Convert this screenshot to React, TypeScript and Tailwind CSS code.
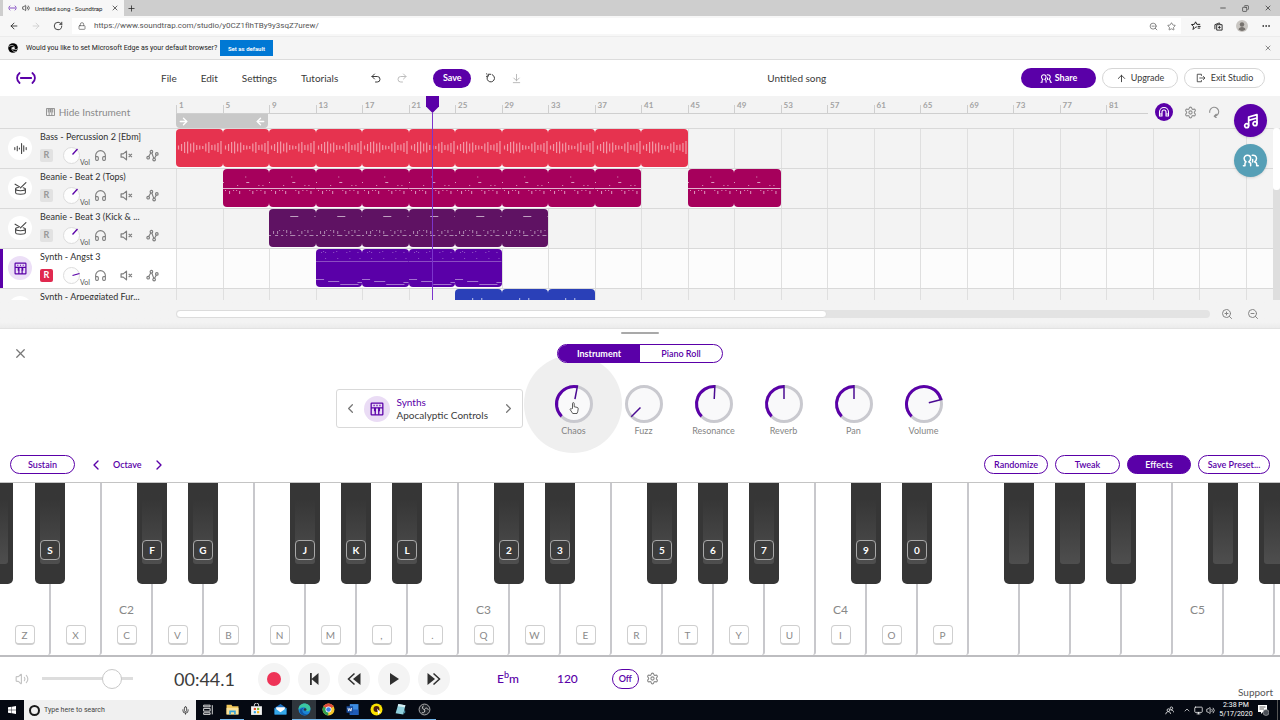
import React from "react";
import {
  ArrowLeft,
  ArrowRight,
  ArrowUp,
  ArrowDownToLine,
  ChevronLeft,
  ChevronRight,
  ChevronUp,
  Copy,
  Headphones,
  Lock,
  Mic,
  Minus,
  MoreHorizontal,
  Plus,
  Redo2,
  RotateCw,
  Settings,
  Star,
  Undo2,
  Volume2,
  X,
  ZoomIn,
  ZoomOut,
  Monitor,
} from "lucide-react";

type Kind = "wave" | "tops" | "kick" | "synth" | "arp";

/* ---------- icons ---------- */

const Logo = ({ className }: { className: string }) => (
  <svg viewBox="0 0 22 14" className={className} fill="none" stroke="currentColor" strokeWidth="1.8" strokeLinecap="round">
    <path d="M4.600 2C1.200 4.700 1.200 9.300 4.600 12M17.400 2c3.400 2.700 3.400 7.300 0 10M5.800 7h10.400" />
  </svg>
);

const EdgeMark = ({ className }: { className: string }) => (
  <svg viewBox="0 0 24 24" className={className}>
    <circle cx="12" cy="12" r="11.500" fill="#000" />
    <path d="M1 10C4 5 15 4 16 11c.4 2-1.500 3-1 4 1.500 2 7 1 8.500-2" fill="none" stroke="#f5f5f5" strokeWidth="1.600" />
    <path d="M10 10c-3 5 1 11 9 11" fill="none" stroke="#f5f5f5" strokeWidth="1.600" />
    <circle cx="12.500" cy="12.500" r="2.800" fill="#f5f5f5" />
  </svg>
);

const People = ({ className }: { className: string }) => (
  <svg viewBox="0 0 24 18" className={className} fill="none" stroke="currentColor" strokeWidth="2.100" strokeLinecap="round" strokeLinejoin="round">
    <path d="M2 16.500h2.200v-3.300c0-1.200.6-1.800 1.600-2.200C4 9.800 3 8.200 3 6.200 3 3.600 5 1.500 7.600 1.500s4.600 2.100 4.600 4.700c0 2-.9 3.600-2.600 4.800l2.600 1.800v3.700" />
    <path d="M14.500 1.700c3.300-.7 6 1.500 6 4.500 0 2-.9 3.600-2.600 4.800 2.200.7 2.800 1.500 2.800 3v2.500H23" />
    <path d="M15 7.500v3.500" />
  </svg>
);

const SynthIcon = ({ className }: { className: string }) => (
  <svg viewBox="0 0 24 24" className={className} fill="none" stroke="currentColor" strokeWidth="2.200">
    <rect x="2" y="2" width="20" height="20" rx="1" />
    <path d="M2 10h20M9 15v7M15 15v7" />
    <path d="M8.500 10v6M15.500 10v6" strokeWidth="3.400" />
    <path d="M6 6h2M11 6h2M16 6h2" />
  </svg>
);

const DrumIcon = ({ className }: { className: string }) => (
  <svg viewBox="0 0 24 24" className={className} fill="none" stroke="currentColor" strokeWidth="2" strokeLinecap="round">
    <path d="M3 13v7c0 3.500 18 3.500 18 0v-7" />
    <path d="M3 13c0 4 18 4 18 0M3 13c0-1.500 2-2.500 5-2.700M21 13c0-1.200-1.500-2-4-2.500" />
    <path d="M2 4l8.500 5M22 1L12 11" />
  </svg>
);

const WaveIcon = ({ className }: { className: string }) => (
  <svg viewBox="0 0 24 24" className={className} fill="none" stroke="currentColor" strokeWidth="2" strokeLinecap="round">
    <path d="M1.500 10v4M6 8v8M10 11v2M14 3v18M18 7v10M22.500 10v4" />
  </svg>
);

const MuteIcon = ({ className }: { className: string }) => (
  <svg viewBox="0 0 24 24" className={className} fill="none" stroke="currentColor" strokeWidth="2.200" strokeLinejoin="round">
    <path d="M2 9v6h4l6 5V4L6 9zM16 9l6 6M22 9l-6 6" />
  </svg>
);

const AutomationIcon = ({ className }: { className: string }) => (
  <svg viewBox="0 0 24 24" className={className} fill="none" stroke="currentColor" strokeWidth="2.100">
    <circle cx="4" cy="16" r="2.400" />
    <circle cx="10" cy="5" r="2.400" />
    <circle cx="15" cy="19.500" r="2.400" />
    <circle cx="20" cy="9" r="2.400" />
    <path d="M5 14l4-7M10.700 7.200l3.500 9.600M15.800 17l3.400-6" />
  </svg>
);

const MagnetIcon = ({ className }: { className: string }) => (
  <svg viewBox="0 0 24 24" className={className} fill="none" stroke="currentColor" strokeWidth="2.200" strokeLinejoin="round">
    <path d="M3 20v-8a9 9 0 0 1 18 0v8h-5v-8a4 4 0 0 0-8 0v8zM3 16h5M16 16h5" />
  </svg>
);

const LoopIcon = ({ className }: { className: string }) => (
  <svg viewBox="0 0 24 24" className={className} fill="none" stroke="currentColor" strokeWidth="2.200" strokeLinecap="round" strokeLinejoin="round">
    <path d="M3.500 13a9 9 0 1 1 9.500 7.500M16.500 16.500l-4 4 4 3" />
  </svg>
);

const RestoreIcon = ({ className }: { className: string }) => (
  <svg viewBox="0 0 24 24" className={className} fill="none" stroke="currentColor" strokeWidth="2.400" strokeLinecap="round">
    <path d="M9.500 3H5v5M5.500 5.500A9 9 0 1 0 15 4" />
    <path d="M1.500 2h.1M11 3h.1M1.500 8h.1" strokeWidth="2.800" />
  </svg>
);

const MusicIcon = ({ className }: { className: string }) => (
  <svg viewBox="0 0 24 24" className={className} fill="none" stroke="currentColor" strokeWidth="2.600" strokeLinejoin="round">
    <path d="M8.500 19V6L21 2.500V16M8.500 11L21 7.500" />
    <circle cx="5.500" cy="19" r="3" />
    <circle cx="18" cy="16" r="3" />
  </svg>
);

const ExitIcon = ({ className }: { className: string }) => (
  <svg viewBox="0 0 24 24" className={className} fill="none" stroke="currentColor" strokeWidth="2">
    <path d="M13 7V3H3v18h10v-4M8 12h13M17 7.500l4.500 4.500-4.500 4.500" />
  </svg>
);

/* ---------- browser chrome ---------- */

const BrowserChrome = () => (
  <header className="font-['Roboto','Noto_Sans',sans-serif] text-[7px] text-[#222]">
    <div className="flex h-4 items-center bg-[#cecece] pl-[3px]">
      <div className="flex h-4 w-[121px] items-center bg-[#f7f7f7] pr-[5px] pl-[5px]">
        <Logo className="h-[6px] w-[9px] shrink-0 text-[#5c12b0]" />
        <Volume2 className="ml-[5px] size-[8px] shrink-0" />
        <span className="ml-[5px] flex-1 text-[6px] whitespace-nowrap">Untitled song - Soundtrap</span>
        <button aria-label="Close tab"><X className="size-[8px]" /></button>
      </div>
      <button aria-label="New tab" className="ml-[3px]"><Plus className="size-[9px]" /></button>
      <div className="ml-auto flex items-center gap-[15px] pr-2">
        <button aria-label="Minimize"><Minus className="size-[8px]" /></button>
        <button aria-label="Restore"><Copy className="size-[7px] -scale-x-100" /></button>
        <button aria-label="Close window"><X className="size-[8px]" /></button>
      </div>
    </div>
    <nav aria-label="Browser" className="flex h-5 items-center bg-[#f7f7f7] pl-[9px]">
      <button aria-label="Back"><ArrowLeft className="size-[10px]" /></button>
      <button aria-label="Forward" className="ml-3"><ArrowRight className="size-[10px] text-[#ccc]" /></button>
      <button aria-label="Reload" className="ml-3"><RotateCw className="size-[10px]" /></button>
      <div className="ml-[9px] flex h-4 flex-1 items-center bg-white pr-[5px] pl-[6px]">
        <Lock className="size-[8px] text-[#555]" />
        <input
          aria-label="Address"
          className="ml-[8px] flex-1 text-[8px] text-[#555] outline-none"
          defaultValue="https://www.soundtrap.com/studio/y0CZ1flhTBy9y3sqZ7urew/"
        />
        <button aria-label="Zoom"><ZoomOut className="size-[9px] text-[#666]" /></button>
        <button aria-label="Add to favorites" className="ml-[9px]"><Star className="size-[9px] text-[#666]" /></button>
      </div>
      <div className="flex items-center gap-[13px] pr-[9px] pl-[10px]">
        <button aria-label="Favorites">
          <svg viewBox="0 0 24 24" className="size-[10px]" fill="none" stroke="currentColor" strokeWidth="2.400">
            <path d="M14 14l-4 1.500-5 5 1-7-5-5 7-.5L11 2l3 6h8M16 13h7M16 17h6" />
          </svg>
        </button>
        <button aria-label="Collections">
          <svg viewBox="0 0 10 10" className="size-[9px]" fill="none" stroke="currentColor">
            <path d="M1 3l5-2 1 2M3 3h6v6H3zM6 4.500v3M4.500 6h3M1 3v5" />
          </svg>
        </button>
        <button aria-label="Profile">
          <svg viewBox="0 0 12 12" className="size-[12px]">
            <circle cx="6" cy="6" r="6" fill="#c9c6c2" />
            <circle cx="6" cy="4.500" r="2.200" fill="#76726e" />
            <path d="M2.500 9.500c.5-3.500 6.500-3.500 7 0a5 5 0 0 1-7 0" fill="#76726e" />
          </svg>
        </button>
        <button aria-label="More"><MoreHorizontal className="size-[10px]" /></button>
      </div>
    </nav>
    <div className="flex h-6 items-center border-t border-b border-t-[#ececec] border-b-[#dcdcdc] bg-[#f5f5f5] pr-[8px] pl-[8px]">
      <EdgeMark className="size-[10px] shrink-0" />
      <span className="ml-2 w-[194px] whitespace-nowrap">Would you like to set Microsoft Edge as your default browser?</span>
      <button className="h-4 w-[53px] bg-[#0078d4] text-[6px] font-semibold text-white">Set as default</button>
      <button aria-label="Dismiss" className="ml-auto"><X className="size-[8px] text-[#555]" /></button>
    </div>
  </header>
);

/* ---------- studio header ---------- */

const StudioHeader = () => (
  <div className="flex h-9 items-center bg-white px-[15px] text-[10px] text-[#3a3a3a]">
    <a href="#home" aria-label="Home"><Logo className="h-[14px] w-[22px] text-[#5a00a8]" /></a>
    <nav aria-label="Studio" className="ml-[124px] flex items-center gap-[24px]">
      <a href="#file">File</a>
      <a href="#edit">Edit</a>
      <a href="#settings">Settings</a>
      <a href="#tutorials">Tutorials</a>
    </nav>
    <button aria-label="Undo" className="ml-8"><Undo2 className="size-[12px]" /></button>
    <button aria-label="Redo" className="ml-[14px]"><Redo2 className="size-[12px] text-[#bdbdbd]" /></button>
    <button className="ml-[25px] h-[19px] w-[38px] rounded-full bg-[#5a00a8] text-[9px] font-bold text-white">Save</button>
    <button aria-label="Revert" className="ml-[15px]"><RestoreIcon className="size-[10px]" /></button>
    <button aria-label="Download" className="ml-[15px]"><ArrowDownToLine className="size-[11px] text-[#b5b5b5]" /></button>
    <h1 className="ml-[245px] whitespace-nowrap">Untitled song</h1>
    <div className="ml-auto flex items-center justify-end gap-[6px]">
      <button className="flex h-5 w-[75px] items-center justify-center gap-[3px] rounded-full bg-[#5a00a8] text-[9px] font-bold text-white">
        <People className="h-[9px] w-[12px]" />Share
      </button>
      <button className="flex h-5 w-[76px] items-center justify-center gap-[4px] rounded-full border border-[#d6d6d6] text-[9px]">
        <ArrowUp className="size-[11px]" />Upgrade
      </button>
      <button className="flex h-5 w-[81px] items-center justify-center gap-[5px] rounded-full border border-[#d6d6d6] text-[9px]">
        <ExitIcon className="size-[10px]" />Exit Studio
      </button>
    </div>
  </div>
);

/* ---------- timeline ---------- */

const COLS = "grid w-[1116px] grid-cols-[repeat(24,minmax(0,1fr))]";
const BARS = Array.from({ length: 24 }, (_, i) => i * 4 + 1);
const LAST_BAR = 81;

const Ruler = () => (
  <div className="flex h-8 bg-[#f3f3f3]">
    <div className="flex w-44 shrink-0 items-center justify-center">
      <button className="flex items-center gap-[4px] text-[10px] text-[#8a8a8a]">
        <svg viewBox="0 0 10 9" className="h-[8px] w-[9px]" fill="none" stroke="currentColor">
          <path d="M.500 .500h9v8h-9zM3.500 .500v8M6.500 .500v8M2.500 1v4M5 1v4M7.500 1v4" />
        </svg>
        Hide Instrument
      </button>
    </div>
    <div className="min-w-0 flex-1 overflow-hidden">
      <div className={COLS}>
        {BARS.map((bar) => (
          <div key={bar} className="flex h-[18px] items-end gap-[2px] border-b border-[#cfcfcf]">
            {bar <= LAST_BAR && (
              <>
                <span className="h-[8px] w-px bg-[#cfcfcf]" />
                <span className="self-center text-[8px] leading-4 font-bold text-[#a3a3a3]">{bar}</span>
              </>
            )}
          </div>
        ))}
      </div>
      <div className="flex h-[14px] w-[92px] items-center justify-between rounded-b-[4px] bg-[#c8c8c8] px-[2px] text-white">
        <ArrowRight className="size-[11px]" strokeWidth={3} />
        <ArrowLeft className="size-[11px]" strokeWidth={3} />
      </div>
    </div>
    <div className="flex w-[132px] shrink-0 items-center gap-[11px] pl-[7px] text-[#8f8f8f]">
      <button aria-label="Snap to grid" className="grid size-[18px] place-items-center rounded-full bg-[#5a00a8] text-white">
        <MagnetIcon className="size-[12px]" />
      </button>
      <button aria-label="Grid settings"><Settings className="size-[13px]" /></button>
      <button aria-label="Loop"><LoopIcon className="size-[12px]" /></button>
    </div>
  </div>
);

const WAVE = [4, 7, 11, 12, 8, 10, 5, 4, 3, 8, 11, 5, 6, 9, 13];

const ClipArt = ({ kind }: { kind: Kind }) => (
  <svg viewBox="0 0 46 38" className="h-[38px] w-full" preserveAspectRatio="none" stroke="#fff" fill="none">
    {kind === "wave" && (
      <path
        strokeOpacity="0.500"
        strokeWidth="1.200"
        d={WAVE.map((h, i) => `M${2.5 + i * 3} ${18.5 - h / 2}v${h}`).join("")}
      />
    )}
    {kind === "tops" && (
      <>
        <path strokeOpacity="0.700" d="M0 19.500h46" />
        <path strokeOpacity="0.600" d="M22 8h1M23 13.500h3M0 13.500h1M14 16.500h1M35 16.500h1M39 16.500h1M10 21.500h1M13 21.500h1M2 21.500h1M26 21.500h1M33 21.500h1M37 21.500h1M6.500 22v3M16.500 22v3M29.500 22v3M41.500 22v3" />
      </>
    )}
    {kind === "kick" && (
      <>
        <path strokeOpacity="0.600" d="M21 7.500h8M45 7.500h1" />
        <path strokeOpacity="0.500" d="M4.500 22v3M8.500 22v3M17.500 21v3M21.500 22v3M32.500 22v3M38.500 21v3M10 21.500h1M14 21.500h1M28 21.500h1M35 21.500h1M42 21.500h1M6 26.500h3M12 26.500h2M17 26.500h1M21 26.500h5M29 26.500h2M35 26.500h2M40 26.500h4M0 26.500h2" />
      </>
    )}
    {kind === "synth" && (
      <>
        <path strokeOpacity="0.300" d="M0 12.500h46" />
        <path strokeOpacity="0.350" d="M5 3.500h1M7 2.500h1M9 3.500h1M17 3.500h1M20 2.500h1M30 3.500h1M33 2.500h1M41 3.500h1M9 9.500h1M21 9.500h1M33 9.500h1M43 9.500h1" />
        <path strokeOpacity="0.450" d="M0 30.500h8M12 32.500h11M24 35.500h18M41 33.500h5" />
      </>
    )}
    {kind === "arp" && <path strokeOpacity="0.700" d="M17.500 9v3M26.500 9v3M19 11.500h1M28 11.500h1" />}
  </svg>
);

type Track = {
  name: string;
  kind: Kind;
  color: string;
  clips: number[];
  active?: boolean;
};

const range = (a: number, b: number) => Array.from({ length: b - a + 1 }, (_, i) => a + i);

const TRACKS: Track[] = [
  { name: "Bass - Percussion 2 [Ebm]", kind: "wave", color: "bg-[#e6334f]", clips: range(1, 11) },
  { name: "Beanie - Beat 2 (Tops)", kind: "tops", color: "bg-[#a6005c]", clips: [...range(2, 10), 12, 13] },
  { name: "Beanie - Beat 3 (Kick & ...", kind: "kick", color: "bg-[#5f1263]", clips: range(3, 8) },
  { name: "Synth - Angst 3", kind: "synth", color: "bg-[#5a00a8]", clips: range(4, 7), active: true },
  { name: "Synth - Arpeggiated Fur...", kind: "arp", color: "bg-[#2a40b8]", clips: range(7, 9) },
];

const TrackRow = ({ track }: { track: Track }) => {
  const Icon = track.kind === "wave" ? WaveIcon : track.kind === "synth" || track.kind === "arp" ? SynthIcon : DrumIcon;
  return (
    <div className={`flex h-10 shrink-0 border-t border-[#d9d9d9] ${track.active ? "bg-[#fcfcfc]" : "bg-[#f3f3f3]"}`}>
      <div
        className={`flex w-44 shrink-0 items-start border-l-3 pl-[5px] ${
          track.active ? "border-l-[#5a00a8] bg-white" : "border-l-transparent"
        }`}
      >
        <div
          className={`mt-[7px] grid size-6 shrink-0 place-items-center rounded-full ${
            track.active ? "bg-[#ecdff7] text-[#5a00a8]" : "bg-white text-[#444]"
          }`}
        >
          <Icon className="size-[13px]" />
        </div>
        <div className="ml-2 flex flex-col">
          <span className="h-[14px] text-[9px] leading-4 whitespace-nowrap text-[#303030]">{track.name}</span>
          <div className="flex h-6 items-center text-[#7d7d7d]">
            <button
              aria-label={`Record arm ${track.name}`}
              className={`grid size-[13px] place-items-center rounded-[2px] text-[9px] leading-3 font-bold ${
                track.active ? "bg-[#e0294f] text-white" : "bg-[#e2e2e2] text-[#999]"
              }`}
            >
              R
            </button>
            <button aria-label={`Volume ${track.name}`} className="ml-[10px] flex items-end">
              <svg viewBox="0 0 17 17" className="size-[17px]">
                <circle cx="8.500" cy="8.500" r="8" fill="#fdfdfd" stroke="#dcdcdc" />
                <path d={track.active ? "M9.500 8.500l7-2" : "M9.500 7.500l5-5.500"} stroke="#5a00a8" strokeWidth="1.300" />
              </svg>
              <span className="text-[7px] leading-[4px] text-[#555]">Vol</span>
            </button>
            <button aria-label={`Solo ${track.name}`} className="ml-[4px]"><Headphones className="size-[13px]" /></button>
            <button aria-label={`Mute ${track.name}`} className="ml-[13px]"><MuteIcon className="size-[13px]" /></button>
            <button aria-label={`Automation ${track.name}`} className="ml-[13px]"><AutomationIcon className="size-[13px]" /></button>
          </div>
        </div>
      </div>
      <div className="min-w-0 flex-1 overflow-hidden">
        <div className={`${COLS} h-full`}>
          {BARS.map((bar, i) => (
            <div key={bar} className="row-start-1 border-l border-[#dfdfdf]" style={{ gridColumnStart: i + 1 }} />
          ))}
          {track.clips.map((c) => (
            <div key={c} className="row-start-1 bg-white/70" style={{ gridColumnStart: c }}>
              <div className={`h-[38px] overflow-hidden rounded-[4px] ${track.color}`}>
                <ClipArt kind={track.kind} />
              </div>
            </div>
          ))}
        </div>
      </div>
    </div>
  );
};

const Timeline = () => (
  <section aria-label="Timeline" className="relative flex min-h-0 flex-1 flex-col">
    <Ruler />
    <div className="flex min-h-0 flex-1">
      <div className="flex min-w-0 flex-1 flex-col overflow-hidden">
        {TRACKS.map((t) => (
          <TrackRow key={t.name} track={t} />
        ))}
      </div>
      <div className="w-[7px] bg-[#dedede]">
        <div className="h-[62px] rounded-[3px] bg-white" />
      </div>
    </div>
    <div className="absolute top-0 bottom-0 left-[426px] flex w-[13px] flex-col items-center">
      <svg viewBox="0 0 13 17" className="h-[17px] w-[13px] shrink-0">
        <path d="M0 0h13v10.500L6.500 17 0 10.500z" fill="#5a00a8" />
      </svg>
      <div className="w-px flex-1 bg-[#7c35cc]" />
    </div>
    <div className="absolute top-[8px] right-[13px] flex flex-col gap-[7px]">
      <button aria-label="Loops" className="grid size-[33px] place-items-center rounded-full bg-[#5a00a8] text-white shadow">
        <MusicIcon className="size-[16px]" />
      </button>
      <button aria-label="Collaborate" className="grid size-[33px] place-items-center rounded-full bg-[#569fb6] text-white shadow">
        <People className="h-[13px] w-[17px]" />
      </button>
    </div>
  </section>
);

const TimelineScroll = () => (
  <div className="flex h-[29px] items-center border-b border-[#e2e2e2] bg-gradient-to-b from-[#f3f3f3] from-80% to-[#ebebeb] pr-[21px] pl-44 text-[#858585]">
    <div className="h-2 flex-1 rounded-full bg-[#e3e3e3]">
      <div className="h-2 w-[63%] rounded-full border border-[#dcdcdc] bg-white" />
    </div>
    <button aria-label="Zoom in" className="ml-[11px]"><ZoomIn className="size-[12px]" /></button>
    <button aria-label="Zoom out" className="ml-[14px]"><ZoomOut className="size-[12px]" /></button>
  </div>
);

/* ---------- instrument panel ---------- */

const KNOBS = [
  { label: "Chaos", value: 0.54 },
  { label: "Fuzz", value: 0 },
  { label: "Resonance", value: 0.51 },
  { label: "Reverb", value: 0.5 },
  { label: "Pan", value: 0.5 },
  { label: "Volume", value: 0.78 },
];

const Knob = ({ label, value }: { label: string; value: number }) => {
  const at = (v: number, r: number) => {
    const a = ((-135 + v * 270) * Math.PI) / 180;
    return `${(20 + r * Math.sin(a)).toFixed(2)} ${(20 - r * Math.cos(a)).toFixed(2)}`;
  };
  return (
    <label className="flex w-[70px] flex-col items-center">
      <svg viewBox="0 0 40 40" className="size-10">
        <circle cx="20" cy="20" r="17.500" fill="#f9f9fa" stroke="#c9c9cf" strokeWidth="3" />
        {value > 0 && (
          <path d={`M${at(0, 17.5)}A17.500 17.500 0 ${value > 0.667 ? 1 : 0} 1 ${at(value, 17.5)}`} fill="none" stroke="#5a00a8" strokeWidth="3" />
        )}
        <path d={`M${at(value, value > 0 ? 19 : 18)}L${at(value, 5)}`} stroke="#4a0a92" strokeWidth="1.500" />
      </svg>
      <span className="text-[9px] leading-[14px] text-[#848484]">{label}</span>
      <input type="range" className="sr-only" min={0} max={100} defaultValue={value * 100} />
    </label>
  );
};

const PILL = "h-[19px] rounded-full border border-[#5a00a8] text-[9px] font-semibold";

const InstrumentPanel = () => (
  <section aria-label="Instrument" className="flex h-[153px] flex-col bg-white text-[#5a00a8]">
    <div className="mx-auto mt-[3px] h-[2px] w-[38px] rounded bg-[#a9a9a9]" />
    <div className="mt-[10px] grid h-[19px] grid-cols-[1fr_auto_1fr] items-center">
      <button aria-label="Close instrument" className="ml-[13px] justify-self-start text-[#777]"><X className="size-[15px]" /></button>
      <div className="z-10 flex h-[19px] w-[166px] overflow-hidden rounded-full border border-[#5a00a8] bg-white text-[9px] font-semibold">
        <button className="w-1/2 bg-[#5a00a8] font-bold text-white">Instrument</button>
        <button className="w-1/2">Piano Roll</button>
      </div>
    </div>
    <div className="mt-[21px] flex items-start justify-center gap-4 pl-[14px]">
      <div className="mt-[5px] flex h-[39px] w-[187px] items-center rounded-[3px] border border-[#d9d9d9] bg-white px-[6px]">
        <button aria-label="Previous preset"><ChevronLeft className="size-[15px] text-[#777]" /></button>
        <span className="ml-[6px] grid size-[26px] place-items-center rounded-full bg-[#eadcf5]">
          <SynthIcon className="size-[14px]" />
        </span>
        <span className="ml-[7px] flex flex-1 flex-col text-[10px] leading-[13px]">
          <span>Synths</span>
          <span className="text-[#3c3c3c]">Apocalyptic Controls</span>
        </span>
        <button aria-label="Next preset"><ChevronRight className="size-[15px] text-[#777]" /></button>
      </div>
      <div className="relative flex">
        <span className="absolute -top-[29px] -left-[15px] size-[98px] rounded-full bg-[#efefef]" />
        <div className="relative flex">
          {KNOBS.map((k) => (
            <Knob key={k.label} {...k} />
          ))}
          <svg viewBox="0 0 20 24" className="absolute top-[18px] left-[30px] h-[12px] w-[10px]">
            <path
              d="M7 13V3a1.700 1.700 0 0 1 3.400 0v6.500l6 1.300c1.600.4 2.200 1.200 2 3L17.500 19l-1.500 4H7.500L2.500 15.500c-1-1.700 1-3 2.300-1.800z"
              fill="#fff"
              stroke="#333"
              strokeWidth="1.600"
            />
          </svg>
        </div>
      </div>
    </div>
    <div className="mt-auto mb-[8px] flex items-center justify-between px-[10px]">
      <div className="flex items-center">
        <button className={`${PILL} w-[65px]`}>Sustain</button>
        <button aria-label="Octave down" className="ml-[13px]"><ChevronLeft className="size-4" /></button>
        <span className="mx-[9px] text-[9px] font-semibold">Octave</span>
        <button aria-label="Octave up"><ChevronRight className="size-4" /></button>
      </div>
      <div className="flex gap-[7px]">
        <button className={`${PILL} w-[64px]`}>Randomize</button>
        <button className={`${PILL} w-[65px]`}>Tweak</button>
        <button className={`${PILL} w-[64px] bg-[#5a00a8] text-white`}>Effects</button>
        <button className={`${PILL} w-[72px]`}>Save Preset...</button>
      </div>
    </div>
  </section>
);

/* ---------- keyboard ---------- */

const WHITE = ["Z", "X", "C", "V", "B", "N", "M", ",", ".", "Q", "W", "E", "R", "T", "Y", "U", "I", "O", "P", "", "", "", "", "", "", ""];
const BLACK: Record<number, string> = {
  0: "S", 2: "F", 3: "G", 5: "J", 6: "K", 7: "L", 9: "2", 10: "3", 12: "5", 13: "6", 14: "7", 16: "9", 17: "0",
  19: "", 20: "", 21: "", 23: "", 24: "",
};
const OCTAVES: Record<number, string> = { 2: "C2", 9: "C3", 16: "C4", 23: "C5" };

const BlackKey = ({ label, side }: { label: string; side: string }) => (
  <button
    aria-label={label ? `Black key ${label}` : "Black key"}
    className={`absolute top-0 z-10 flex h-[101px] w-[30px] flex-col items-center rounded-b-[5px] bg-[#363636] ${side}`}
  >
    <span className="flex h-[81px] w-[20px] flex-col justify-end rounded-b-[3px] bg-gradient-to-b from-[#363636] from-20% to-[#4e4e4e] pb-[4px]">
      {label && (
        <span className="grid size-5 place-items-center rounded-[4px] border border-[#a8a8a8] bg-[#3c3c3c] text-[10px] leading-4 font-bold text-white">
          {label}
        </span>
      )}
    </span>
  </button>
);

const Keyboard = () => (
  <section aria-label="Keyboard" className="flex h-[175px] overflow-hidden border-t border-b-2 border-t-[#c4c4c4] border-b-[#bdbdc0] bg-white">
    {WHITE.map((k, i) => (
      <div key={i} className="relative flex w-[51px] shrink-0">
        {i === 0 && <BlackKey label="" side="-left-[17px]" />}
        <button
          aria-label={k ? `Key ${k}` : "Key"}
          className="flex flex-1 flex-col items-center justify-end rounded-b-[3px] border-r-2 border-[#c8c8cc] pb-[10px] text-[#8a8a8a]"
        >
          {OCTAVES[i] && <span className={`text-[12px] leading-4 text-[#888] ${k ? "mb-[7px]" : "mb-[27px]"}`}>{OCTAVES[i]}</span>}
          {k && (
            <span className="grid size-5 place-items-center rounded-[4px] border border-b-2 border-[#cfcfcf] text-[10px] leading-4">{k}</span>
          )}
        </button>
        {BLACK[i] !== undefined && <BlackKey label={BLACK[i]} side="-right-[14px]" />}
      </div>
    ))}
  </section>
);

/* ---------- transport ---------- */

const ROUND = "grid size-8 place-items-center rounded-full bg-[#f4f4f4] text-[#2f2f2f]";

const Transport = () => (
  <section aria-label="Transport" className="flex h-[43px] items-center bg-white pl-[15px] text-[#5a00a8]">
    <Volume2 className="size-[14px] text-[#c4c4c4]" />
    <input
      type="range"
      aria-label="Master volume"
      defaultValue={84}
      className="ml-[13px] h-[3px] w-[91px] appearance-none bg-[#dddddd] [&::-webkit-slider-thumb]:size-5 [&::-webkit-slider-thumb]:appearance-none [&::-webkit-slider-thumb]:rounded-full [&::-webkit-slider-thumb]:border [&::-webkit-slider-thumb]:border-[#c8c8c8] [&::-webkit-slider-thumb]:bg-white"
    />
    <output className="ml-[41px] w-[84px] text-[18px] leading-6 text-[#3c3c3c]">00:44.1</output>
    <div className="flex gap-[8px]">
      <button aria-label="Record" className={ROUND}><span className="size-[14px] rounded-full bg-[#ee3357]" /></button>
      <button aria-label="To start" className={ROUND}>
        <svg viewBox="0 0 12 14" className="h-[14px] w-[12px]" fill="currentColor"><path d="M2 1h1.800v12H2zM10.500 1v12L3.500 7z" /></svg>
      </button>
      <button aria-label="Rewind" className={ROUND}>
        <svg viewBox="0 0 16 14" className="h-[14px] w-[16px]" fill="currentColor">
          <path d="M14.500 1v12L7 7z" />
          <path d="M8.500 1.500L2.500 7l6 5.500" fill="none" stroke="currentColor" strokeWidth="1.500" />
        </svg>
      </button>
      <button aria-label="Play" className={ROUND}>
        <svg viewBox="0 0 12 14" className="h-[14px] w-[12px]" fill="currentColor"><path d="M2 1l9 6-9 6z" /></svg>
      </button>
      <button aria-label="Fast forward" className={ROUND}>
        <svg viewBox="0 0 16 14" className="h-[14px] w-[16px]" fill="currentColor">
          <path d="M1.500 1v12L9 7z" />
          <path d="M7.500 1.500l6 5.500-6 5.500" fill="none" stroke="currentColor" strokeWidth="1.500" />
        </svg>
      </button>
    </div>
    <button className="ml-[47px] text-[12px] font-medium">E<sup className="text-[9px]">b</sup>m</button>
    <button className="ml-[38px] text-[12px] font-medium">120</button>
    <button className="ml-[34px] h-5 w-[27px] rounded-full border border-[#5a00a8] text-[9px] font-semibold">Off</button>
    <button aria-label="Metronome settings" className="ml-[7px]"><Settings className="size-[13px] text-[#888]" /></button>
    <a href="#support" className="mr-[7px] ml-auto self-end text-[10px] leading-4 text-[#555]">Support</a>
  </section>
);

/* ---------- taskbar ---------- */

const AppIcon = ({ name, open, current, children }: { name: string; open?: boolean; current?: boolean; children: React.ReactNode }) => (
  <button
    aria-label={name}
    className={`grid h-5 w-[24px] place-items-center border-b ${open ? "border-[#76b9ed]" : "border-transparent"} ${current ? "bg-[#2f353c]" : ""}`}
  >
    <svg viewBox="0 0 24 24" className="size-[13px]">{children}</svg>
  </button>
);

const Taskbar = () => (
  <footer className="flex h-5 items-center bg-[#050912] font-['Roboto','Noto_Sans',sans-serif] text-[7px] text-white">
    <button aria-label="Start" className="grid w-6 place-items-center">
      <svg viewBox="0 0 10 10" className="size-[8px]" fill="#fff"><path d="M0 1.500l4.500-.6v3.800H0zM5 .800L10 0v4.700H5zM0 5.200h4.500V9L0 8.400zM5 5.200h5V10l-5-.8z" /></svg>
    </button>
    <label className="flex h-5 w-[172px] items-center bg-[#f0f0f0] pr-[6px] pl-[5px] text-[#222]">
      <span className="size-[11px] rounded-full border-2 border-[#1a1a1a]" />
      <input
        aria-label="Search"
        placeholder="Type here to search"
        className="ml-[4px] min-w-0 flex-1 text-[7px] outline-none placeholder:text-[#444]"
      />
      <Mic className="size-[9px]" />
    </label>
    <div className="flex">
      <AppIcon name="Task view">
        <path d="M3 4h12v3H3zM3 10h12v5H3zM3 18h12v3H3zM19 4v17" stroke="#ddd" strokeWidth="1.800" fill="none" />
      </AppIcon>
      <AppIcon name="File Explorer" open>
        <path d="M1 3h9l2 3h11v15H1z" fill="#f2c85b" />
        <path d="M1 9h22v12H1z" fill="#fbe39a" />
        <path d="M6 14h12v7h-3v-4H9v4H6z" fill="#37a3d8" />
      </AppIcon>
      <AppIcon name="Store">
        <path d="M8 6V4a4 4 0 0 1 8 0v2" stroke="#fff" strokeWidth="1.500" fill="none" />
        <path d="M2 6h20v16H2z" fill="#f3f3f3" />
        <path d="M7 9h4v4H7z" fill="#e8502b" />
        <path d="M13 9h4v4h-4z" fill="#7db928" />
        <path d="M7 15h4v4H7z" fill="#2ea1e0" />
        <path d="M13 15h4v4h-4z" fill="#fbb712" />
      </AppIcon>
      <AppIcon name="Mail">
        <path d="M1 9l11-7 11 7v12H1z" fill="#1c6fc0" />
        <path d="M4 8h16v6l-8 4-8-4z" fill="#fff" />
        <path d="M1 9l11 8 11-8v12H1z" fill="#35a8ea" />
      </AppIcon>
      <AppIcon name="Microsoft Edge" open current>
        <circle cx="12" cy="12" r="11" fill="#1b84d6" />
        <path d="M1 12C1 5 6 1 12 1s11 4 11 9c0 4-4 6-8 5 1-2 1-6-3-7-5-1-9 1-11 4" fill="#3cc6a0" />
        <path d="M8 12c-1 6 4 10 10 9-7 5-17-1-14-9 1-2 4-3 6-3z" fill="#1155a5" />
        <circle cx="13" cy="12" r="2.500" fill="#2f353c" />
      </AppIcon>
      <AppIcon name="Chrome" open>
        <circle cx="12" cy="12" r="11" fill="#f6c52a" />
        <path d="M12 12L2.500 6.500A11 11 0 0 1 21.500 6.500z" fill="#df4a3c" />
        <path d="M12 12L2.500 6.500A11 11 0 0 0 11.500 23z" fill="#2f9e51" />
        <circle cx="12" cy="12" r="5.500" fill="#fff" />
        <circle cx="12" cy="12" r="4.200" fill="#3f80ea" />
      </AppIcon>
      <AppIcon name="Word" open>
        <path d="M7 2h16v20H7z" fill="#3d8be0" />
        <path d="M7 12h16v10H7z" fill="#1f5bb8" />
        <path d="M1 6h12v12H1z" fill="#174a9c" />
        <path d="M3.500 9l1.500 6 2-5 2 5 1.500-6" stroke="#fff" strokeWidth="1.500" fill="none" />
      </AppIcon>
      <AppIcon name="Norton" open>
        <circle cx="12" cy="12" r="11" fill="#fbe200" />
        <circle cx="12" cy="11" r="5.500" fill="#4b1d10" />
        <path d="M13 10l7 8-3 .5-1.500 3.500z" fill="#fff" />
      </AppIcon>
      <AppIcon name="Notepad" open>
        <path d="M8 2l13 2-4 17-14-2z" fill="#8fd0dc" />
        <path d="M8 2l13 2-1 4L7 6z" fill="#d7eef2" />
        <path d="M17 21l4-4-1-6z" fill="#4a93a8" />
      </AppIcon>
      <AppIcon name="OBS" open>
        <circle cx="12" cy="12" r="10" fill="#20242a" stroke="#c8c8c8" strokeWidth="1.500" />
        <path d="M12 12c-4 0-5-4-2-7M12 12c2-4 6-3 7 1M12 12c2 4-1 7-5 6" stroke="#c8c8c8" strokeWidth="1.800" fill="none" />
      </AppIcon>
    </div>
    <div className="ml-auto flex items-center gap-[3px]">
      <button aria-label="People" className="mr-[6px]">
        <svg viewBox="0 0 24 24" className="size-[9px]" fill="none" stroke="currentColor" strokeWidth="2">
          <circle cx="9" cy="11" r="3.500" />
          <circle cx="17" cy="6" r="3.500" />
          <path d="M2 22c0-9 13-9 13-1M15 11c5-1 8 2 8 6" />
        </svg>
      </button>
      <ChevronUp className="size-[8px]" />
      <Monitor className="size-[9px]" />
      <Volume2 className="size-[9px]" />
      <time className="w-[36px] text-center leading-[9px]">
        2:38 PM<br />5/17/2020
      </time>
      <button aria-label="Notifications" className="mr-[5px]">
        <svg viewBox="0 0 24 24" className="size-[12px]">
          <path d="M2 2h18v14h-8l-4 4v-4H2z" fill="#fff" />
          <path d="M5 6h12M5 10h9" stroke="#333" strokeWidth="1.500" />
          <circle cx="18" cy="17" r="6" fill="#4a4f57" stroke="#ccc" />
        </svg>
      </button>
      <span className="mr-[2px] h-5 w-px bg-[#555]" />
    </div>
  </footer>
);

export default function App() {
  return (
    <div className="flex h-screen min-h-[640px] flex-col overflow-hidden bg-white font-['Lato','Liberation_Sans',sans-serif]">
      <BrowserChrome />
      <main className="flex min-h-0 flex-1 flex-col">
        <StudioHeader />
        <Timeline />
        <TimelineScroll />
        <InstrumentPanel />
        <Keyboard />
        <Transport />
      </main>
      <Taskbar />
    </div>
  );
}
